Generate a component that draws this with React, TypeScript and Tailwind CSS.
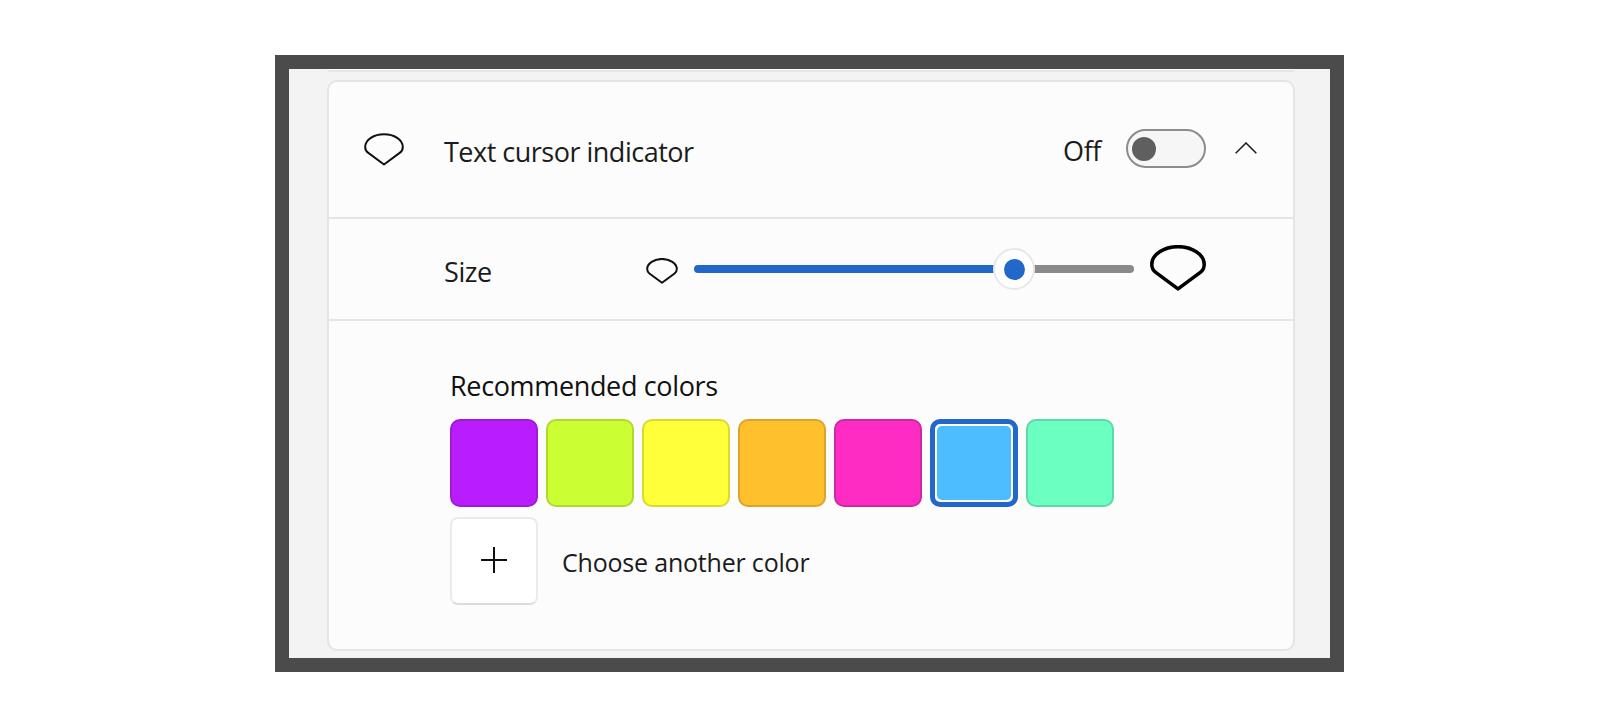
const FONT = "font-['Open_Sans',sans-serif]";

const SWATCHES = [
  { fill: "bg-[#b91cff]", edge: "border-[#a01bd8]" },
  { fill: "bg-[#ccff33]", edge: "border-[#b0d92f]" },
  { fill: "bg-[#ffff3a]", edge: "border-[#dbd92e]" },
  { fill: "bg-[#ffc02e]", edge: "border-[#dba52b]" },
  { fill: "bg-[#ff2cc3]", edge: "border-[#cc2aa2]" },
  { fill: "bg-[#4dbdff]", edge: "", selected: true },
  { fill: "bg-[#6cffc2]", edge: "border-[#5dd8a8]" },
];

function Drop({ className, stroke = 2, color = "#111" }: { className: string; stroke?: number; color?: string }) {
  return (
    <svg viewBox="0 0 40 33" className={className} fill="none" aria-hidden="true">
      <path
        d="M20 31.5 L4 19.6 C2.2 18.2 1.2 16.2 1.2 13.9 C1.2 6.6 10 1.2 20 1.2 C30 1.2 38.8 6.6 38.8 13.9 C38.8 16.2 37.8 18.2 36 19.6 Z"
        stroke={color}
        strokeWidth={stroke}
        strokeLinejoin="round"
        vectorEffect="non-scaling-stroke"
      />
    </svg>
  );
}

function Toggle() {
  return (
    <div className="w-[80px] h-[39px] rounded-full border-2 border-[#8c8c8c] bg-[#f6f6f6] flex items-center pl-[4px]">
      <div className="w-[24px] h-[24px] rounded-full bg-[#5f5f5f]" />
    </div>
  );
}

function Slider() {
  return (
    <div className="w-[440px] h-[42px] flex items-center">
      <div className="w-[300px] h-[8px] rounded-l-full bg-[#2268c9]" />
      <div className="w-[42px] h-[42px] -mx-[1px] shrink-0 z-10 rounded-full bg-white border-2 border-[#e8e8e8] flex items-center justify-center">
        <div className="w-[21px] h-[21px] rounded-full bg-[#2268c9]" />
      </div>
      <div className="flex-1 h-[8px] rounded-r-full bg-[#8a8a8a]" />
    </div>
  );
}

export default function App() {
  return (
    <div className={`${FONT} w-full h-[727px] bg-white flex items-center justify-center text-[#1b1b1b]`}>
      <div className="w-[1069px] h-[617px] border-[14px] border-[#4b4b4b] bg-[#f3f3f3] overflow-hidden">
        <div className="ml-[38px] mr-[35px] h-[3px] rounded-b-[8px] border-b-2 border-[#e6e6e6] bg-[#fcfcfc]" />
        <div className="ml-[38px] mr-[35px] mt-[8px] h-[571px] rounded-[10px] border-2 border-[#e5e5e5] bg-[#fcfcfc]">
          <div className="h-[137px] border-b-2 border-[#e5e5e5] flex items-center pl-[35px] pr-[36px]">
            <Drop className="w-[40px] h-[33px] shrink-0" />
            <span className="ml-[40px] text-[27px] leading-none -tracking-[0.5px] flex-1 mt-[3px]">Text cursor indicator</span>
            <span className="text-[27px] leading-none -tracking-[0.4px] mt-[2px]">Off</span>
            <div className="ml-[25px] -mt-[2px]">
              <Toggle />
            </div>
            <svg viewBox="0 0 22 12" className="ml-[29px] w-[22px] h-[12px] -mt-[3px]" fill="none" aria-hidden="true">
              <path d="M0.7 11.3 L11 1 L21.3 11.3" stroke="#1b1b1b" strokeWidth="1.5" />
            </svg>
          </div>
          <div className="h-[102px] border-b-2 border-[#e5e5e5] flex items-center pl-[115px]">
            <span className="w-[202px] text-[27px] leading-none -tracking-[0.4px] mt-[4px]">Size</span>
            <Drop className="w-[32px] h-[26px] shrink-0 mt-[3px]" />
            <div className="ml-[16px]">
              <Slider />
            </div>
            <Drop className="ml-[16px] w-[56px] h-[46px] shrink-0 -mt-[3px]" stroke={3.5} color="#000" />
          </div>
          <div className="pl-[121px] pt-[49px]">
            <div className="text-[27px] leading-[32px] -tracking-[0.35px] text-[#111]">Recommended colors</div>
            <div className="mt-[17px] flex gap-[8px]">
              {SWATCHES.map((s) =>
                s.selected ? (
                  <div key={s.fill} className="w-[88px] h-[88px] rounded-[10px] border-[5px] border-[#2268c9] bg-white p-[2px]">
                    <div className={`w-full h-full rounded-[5px] ${s.fill}`} />
                  </div>
                ) : (
                  <div key={s.fill} className={`w-[88px] h-[88px] rounded-[10px] border-2 ${s.edge} ${s.fill}`} />
                ),
              )}
            </div>
            <div className="mt-[10px] flex items-center">
              <div className="w-[88px] h-[88px] rounded-[8px] border-2 border-[#ebebeb] border-b-[#dcdcdc] bg-white flex items-center justify-center">
                <svg viewBox="0 0 26 26" className="w-[26px] h-[26px] -mt-[2px]" fill="none" aria-hidden="true">
                  <path d="M0 13 H26 M13 0 V26" stroke="#111" strokeWidth="2" />
                </svg>
              </div>
              <span className="ml-[24px] text-[25px] leading-none -tracking-[0.2px] mt-[3px]">Choose another color</span>
            </div>
          </div>
        </div>
      </div>
    </div>
  );
}
